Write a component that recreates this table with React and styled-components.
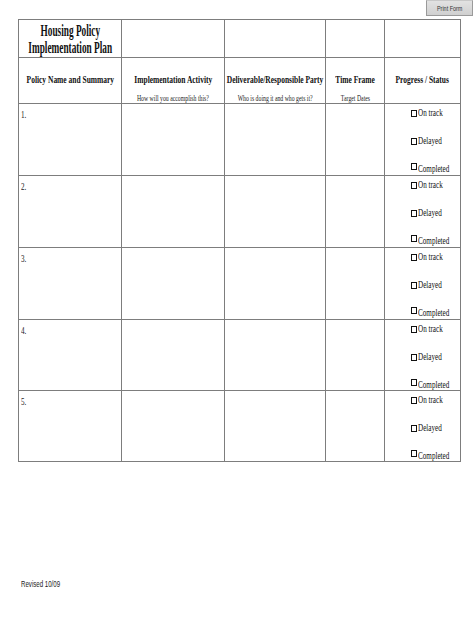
import React from "react"
import styled, { createGlobalStyle } from "styled-components"

const GlobalStyle = createGlobalStyle`
    html, body {
        margin: 0;
        padding: 0;
        background: #fff;
    }
    body {
        font-family: "Liberation Serif", "Times New Roman", serif;
        color: #111;
        -webkit-font-smoothing: antialiased;
    }
`;

const rows = ["1.", "2.", "3.", "4.", "5."]
const rowHeights = [72, 72, 72, 71, 71]

const headers = [
    { title: "Policy Name and Summary" },
    { title: "Implementation Activity", sub: "How will you accomplish this?" },
    { title: "Deliverable/Responsible Party", sub: "Who is doing it and who gets it?" },
    { title: "Time Frame", sub: "Target Dates" },
    { title: "Progress / Status" },
]

const statuses = ["On track", "Delayed", "Completed"]

function App() {
    return (
        <Page>
            <GlobalStyle />
            <Toolbar>
                <PrintButton type="button">
                    <Squeeze $origin="center">Print Form</Squeeze>
                </PrintButton>
            </Toolbar>

            <Grid>
                <TitleCell>
                    <Squeeze $origin="center" $scale={0.58}>Housing Policy</Squeeze>
                    <Squeeze $origin="center" $scale={0.58}>Implementation Plan</Squeeze>
                </TitleCell>
                <Cell $h={38} />
                <Cell $h={38} />
                <Cell $h={38} />
                <Cell $h={38} />

                {headers.map((h) => (
                    <HeadCell key={h.title}>
                        <HeadTitle $origin="center">{h.title}</HeadTitle>
                        {h.sub && <HeadSub $origin="center">{h.sub}</HeadSub>}
                    </HeadCell>
                ))}

                {rows.map((num, i) => (
                    <React.Fragment key={num}>
                        <Cell $h={rowHeights[i]}>
                            <RowNum $origin="left">{num}</RowNum>
                        </Cell>
                        <Cell $h={rowHeights[i]} />
                        <Cell $h={rowHeights[i]} />
                        <Cell $h={rowHeights[i]} />
                        <StatusCell $h={rowHeights[i]}>
                            {statuses.map((s) => (
                                <StatusItem key={s}>
                                    <Box $raised={s === "Completed"} />
                                    <Squeeze $origin="left">{s}</Squeeze>
                                </StatusItem>
                            ))}
                        </StatusCell>
                    </React.Fragment>
                ))}
            </Grid>

            <Footer>
                <Squeeze $origin="left">Revised 10/09</Squeeze>
            </Footer>
        </Page>
    )
}

const Page = styled.div`
    width: 474px;
    height: 630px;
    overflow: hidden;
`;

const Toolbar = styled.div`
    display: flex;
    justify-content: flex-end;
    padding-right: 1px;
    height: 19px;
`;

const PrintButton = styled.button`
    width: 47px;
    height: 16px;
    padding: 0;
    margin: 0;
    border: 1px solid #9a9a9a;
    border-top-color: #c8c8c8;
    background: linear-gradient(#e2e2e2, #d0d0d0);
    font-family: "Liberation Sans", Arial, sans-serif;
    font-size: 8px;
    color: #333;
    display: flex;
    justify-content: center;
    align-items: center;
    overflow: visible;
`;

const Squeeze = styled.span`
    display: inline-block;
    flex-shrink: 0;
    white-space: nowrap;
    transform: scaleX(${(p) => p.$scale || 0.68});
    transform-origin: ${(p) => p.$origin || "center"};
`;

const Grid = styled.div`
    display: grid;
    grid-template-columns: 103px 103px 101px 59px 76px;
    width: 443px;
    margin-left: 18px;
    border-top: 1px solid #7d7d7d;
    border-left: 1px solid #7d7d7d;
    box-sizing: border-box;
`;

const Cell = styled.div`
    box-sizing: border-box;
    height: ${(p) => p.$h || 72}px;
    border-right: 1px solid #7d7d7d;
    border-bottom: 1px solid #7d7d7d;
    overflow: visible;
`;

const TitleCell = styled(Cell).attrs({ $h: 38 })`
    display: flex;
    flex-direction: column;
    align-items: center;
    padding-top: 2px;
    font-weight: bold;
    font-size: 16px;
    line-height: 17px;
    color: #111;
`;

const HeadCell = styled(Cell).attrs({ $h: 46 })`
    display: flex;
    flex-direction: column;
    align-items: center;
    padding-top: 15px;
`;

const HeadTitle = styled(Squeeze)`
    font-weight: bold;
    font-size: 11px;
    line-height: 13px;
    color: #111;
`;

const HeadSub = styled(Squeeze)`
    margin-top: 7px;
    font-size: 8.5px;
    line-height: 10px;
    color: #222;
`;

const RowNum = styled(Squeeze)`
    margin: 2px 0 0 2px;
    font-size: 10.5px;
    line-height: 12px;
    color: #222;
`;

const StatusCell = styled(Cell)`
    display: flex;
    flex-direction: column;
    gap: 16px;
    padding: 3px 0 0 26px;
`;

const StatusItem = styled.div`
    display: flex;
    align-items: center;
    height: 12px;
    font-size: 10.5px;
    line-height: 12px;
    color: #111;

    span {
        margin-left: 1px;
    }
`;

const Box = styled.i`
    display: block;
    flex-shrink: 0;
    width: 6px;
    height: 7px;
    box-sizing: border-box;
    border: 1.5px solid #111;
    position: relative;
    top: ${(p) => (p.$raised ? "-3px" : "0")};
`;

const Footer = styled.div`
    margin: 117px 0 0 21px;
    font-family: "Liberation Sans", Arial, sans-serif;
    font-size: 9px;
    line-height: 11px;
    color: #222;
`;

export default App
